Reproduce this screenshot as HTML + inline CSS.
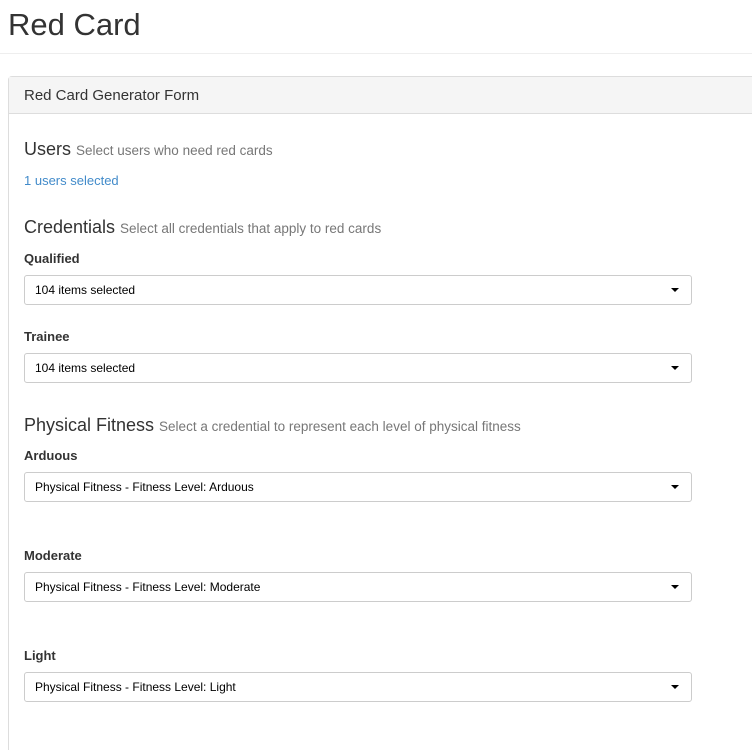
<!DOCTYPE html>
<html><head><style>
html,body{margin:0;width:752px;height:750px;overflow:hidden}
body{background:#fff;font-family:"Liberation Sans",Arial,sans-serif;color:#333;position:relative}
.a{position:absolute;white-space:nowrap}
h1{position:absolute;left:8px;top:5px;margin:0;font-size:31px;font-weight:400;line-height:40px;color:#333}
.hr{position:absolute;left:0;right:0;top:53px;border-top:1px solid #eee}
.panel{position:absolute;left:8px;top:76px;width:760px;height:690px;border:1px solid #ddd;border-radius:4px}
.ph{position:absolute;left:0;right:0;top:0;height:36px;background:#f5f5f5;border-bottom:1px solid #ddd}
.h{font-size:18px;color:#333}
.h small{font-size:13.5px;color:#777}
.lab{font-size:13px;font-weight:bold;color:#333}
.sel{position:absolute;left:24px;width:666px;height:28px;border:1px solid #ccc;border-radius:3px;font-size:12px;line-height:28px;color:#000;box-sizing:content-box}
.sel span{position:absolute;left:10px}
.sel i{position:absolute;right:12px;top:12px;border-left:4px solid transparent;border-right:4px solid transparent;border-top:4px solid #000}
</style></head><body>
<h1>Red Card</h1>
<div class="hr"></div>
<div class="panel"><div class="ph"></div></div>
<div class="a" style="left:24px;top:87px;font-size:15px;color:#333">Red Card Generator Form</div>
<div class="a h" style="left:24px;top:139px">Users <small>Select users who need red cards</small></div>
<div class="a" style="left:24px;top:173px;font-size:13px;color:#428bca">1 users selected</div>
<div class="a h" style="left:24px;top:217px">Credentials <small>Select all credentials that apply to red cards</small></div>
<div class="a lab" style="left:24px;top:251px">Qualified</div>
<div class="sel" style="top:275px"><span>104 items selected</span><i></i></div>
<div class="a lab" style="left:24px;top:329px">Trainee</div>
<div class="sel" style="top:353px"><span>104 items selected</span><i></i></div>
<div class="a h" style="left:24px;top:415px">Physical Fitness <small>Select a credential to represent each level of physical fitness</small></div>
<div class="a lab" style="left:24px;top:448px">Arduous</div>
<div class="sel" style="top:472px"><span>Physical Fitness - Fitness Level: Arduous</span><i></i></div>
<div class="a lab" style="left:24px;top:548px">Moderate</div>
<div class="sel" style="top:572px"><span>Physical Fitness - Fitness Level: Moderate</span><i></i></div>
<div class="a lab" style="left:24px;top:648px">Light</div>
<div class="sel" style="top:672px"><span>Physical Fitness - Fitness Level: Light</span><i></i></div>
</body></html>
